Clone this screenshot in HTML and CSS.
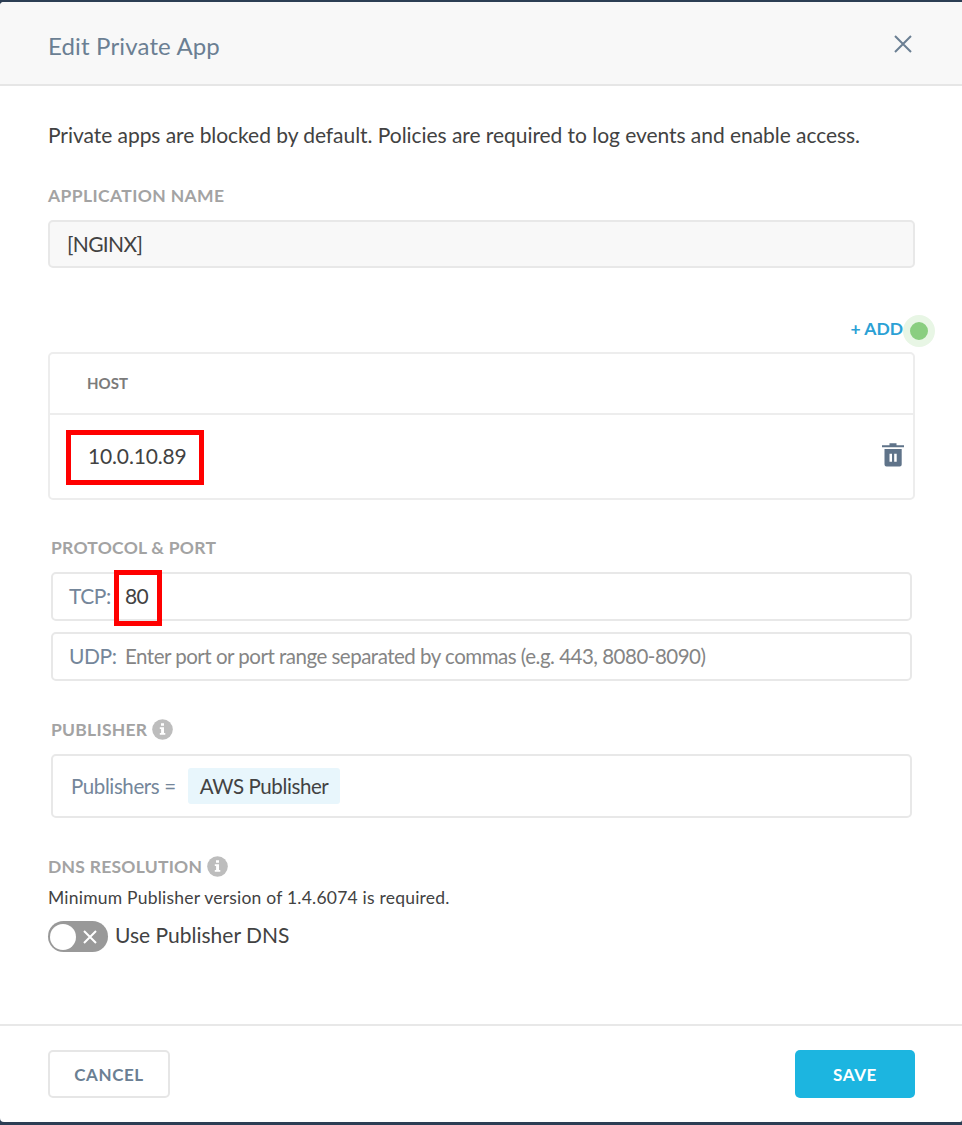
FILE: index.html
```
<!DOCTYPE html>
<html lang="en">

<head>
    <meta charset="UTF-8">
    <meta name="viewport" content="width=device-width, initial-scale=1.0">
    <title>Edit Private App</title>
    <link rel="stylesheet" href="styles.css">
</head>

<body>
    <div class="modal">
        <div class="modal-header">
            <h1>Edit Private App</h1>
            <button class="close-button" aria-label="Close">
                <svg width="20" height="20" viewBox="0 0 20 20">
                    <path d="M2 2L18 18M18 2L2 18" />
                </svg>
            </button>
        </div>

        <div class="modal-body">
            <p class="intro">Private apps are blocked by default. Policies are required to log events and enable access.</p>

            <div class="label app-label">APPLICATION NAME</div>
            <div class="input input-disabled">[NGINX]</div>

            <div class="add-row">
                <a class="add-link">+ ADD</a>
                <span class="beacon"></span>
            </div>

            <div class="host-table">
                <div class="host-head">HOST</div>
                <div class="host-row">
                    <div class="marked marked-host">10.0.10.89</div>
                    <svg class="trash" width="24" height="26" viewBox="0 0 24 26">
                        <path d="M8.5 1.2h7v2H23v2.1H1V3.2h7.5z" />
                        <path fill-rule="evenodd" d="M3.5 7h17.2v15.5q0 2-2 2H5.500q-2 0-2-2zM8.500 11.800v8H11v-8zM13.200 11.800v8h2.500v-8z" />
                    </svg>
                </div>
            </div>

            <div class="group">
                <div class="label">PROTOCOL &amp; PORT</div>
                <div class="input port">
                    <span class="prefix">TCP:</span>
                    <div class="marked marked-port">80</div>
                </div>
                <div class="input port">
                    <span class="prefix">UDP:</span>
                    <span class="placeholder">Enter port or port range separated by commas (e.g. 443, 8080-8090)</span>
                </div>
            </div>

            <div class="group">
                <div class="label">
                    <span>PUBLISHER</span>
                    <svg class="info" width="21" height="21" viewBox="0 0 21 21">
                        <circle cx="10.5" cy="10.5" r="10.3" />
                        <path d="M9 4.300h3v2.500H9zM7.800 8.300H12v5.700h1.300v1.800H7.800V14h1.300v-3.900H7.800z" />
                    </svg>
                </div>
                <div class="input publishers">
                    <span class="prefix">Publishers =</span>
                    <span class="chip">AWS Publisher</span>
                </div>
            </div>

            <div class="label dns-label">
                <span>DNS RESOLUTION</span>
                <svg class="info" width="21" height="21" viewBox="0 0 21 21">
                    <circle cx="10.5" cy="10.5" r="10.3" />
                    <path d="M9 4.300h3v2.500H9zM7.800 8.300H12v5.700h1.300v1.800H7.800V14h1.300v-3.900H7.800z" />
                </svg>
            </div>
            <p class="note">Minimum Publisher version of 1.4.6074 is required.</p>
            <div class="toggle-row">
                <span class="toggle">
                    <span class="knob"></span>
                    <svg width="14" height="14" viewBox="0 0 14 14">
                        <path d="M1 1L13 13M13 1L1 13" />
                    </svg>
                </span>
                <span class="toggle-text">Use Publisher DNS</span>
            </div>
        </div>

        <div class="modal-footer">
            <button class="btn btn-cancel">CANCEL</button>
            <button class="btn btn-save">SAVE</button>
        </div>
    </div>
</body>

</html>
```
FILE: styles.css
```
* {
    box-sizing: border-box;
    margin: 0;
    padding: 0;
}

body {
    background: #2c3e54;
    font-family: Lato, "Open Sans", sans-serif;
    font-size: 21px;
    color: #424242;
    padding-top: 2px;
}

.modal {
    height: 1120px;
    background: white;
    border-radius: 4px 0 2px 4px;
    display: flex;
    flex-direction: column;
}

.modal-header {
    height: 84px;
    background: #f8f8f8;
    border-bottom: 2px solid #e6e6e6;
    border-radius: 4px 0 0 0;
    display: flex;
    justify-content: space-between;
    align-items: center;
    padding: 4px 49px 0 48px;
}

h1 {
    font-size: 24px;
    font-weight: normal;
    letter-spacing: 0.15px;
    color: #6b7f93;
}

.close-button {
    width: 20px;
    height: 20px;
    margin-bottom: 2px;
    border: 0;
    background: none;
}

.close-button svg {
    display: block;
    fill: none;
    stroke: #6b7f93;
    stroke-width: 2;
}

.modal-body {
    flex: 1;
    padding: 37px 47px 0 48px;
}

.intro {
    height: 24px;
    line-height: 24px;
    letter-spacing: -0.05px;
    margin-bottom: 39px;
    white-space: nowrap;
}

.label {
    height: 20px;
    line-height: 20px;
    font-size: 17.5px;
    font-weight: bold;
    letter-spacing: 0.25px;
    color: #a3a3a3;
    margin-bottom: 14px;
    display: flex;
    align-items: center;
    gap: 5px;
}

.app-label {
    letter-spacing: 0.38px;
}

.input {
    height: 49px;
    border: 2px solid #e8e8e8;
    border-radius: 5px;
    display: flex;
    align-items: center;
    white-space: nowrap;
}

.input-disabled {
    height: 48px;
    background: #f8f8f8;
    padding: 0 0 2px 17px;
    letter-spacing: -0.65px;
}

.add-row {
    height: 32px;
    margin: 47px -20px 5px 0;
    display: flex;
    justify-content: flex-end;
    align-items: center;
}

.add-link {
    font-size: 17.5px;
    font-weight: bold;
    color: #2ba1d5;
    padding-bottom: 6px;
}

.beacon {
    width: 32px;
    height: 32px;
    border: 7px solid #e8f6e5;
    border-radius: 50%;
    background: #8ace80;
}

.host-table {
    height: 148px;
    border: 2px solid #ededed;
    border-radius: 5px;
    margin-bottom: 38px;
}

.host-head {
    height: 61px;
    border-bottom: 2px solid #ededed;
    padding: 0 0 2px 37px;
    display: flex;
    align-items: center;
    font-size: 15px;
    font-weight: bold;
    color: #7b7b7b;
}

.host-row {
    height: 83px;
    padding: 2px 8px 0 16px;
    display: flex;
    justify-content: space-between;
    align-items: center;
}

/* red callout frames around the values to check */
.marked {
    border: 5px solid #ff0000;
    display: flex;
    align-items: center;
}

.marked-host {
    width: 138px;
    height: 55px;
    padding: 0 0 4px 17px;
    letter-spacing: -0.15px;
}

.marked-port {
    width: 48px;
    height: 56px;
    margin-top: 2px;
    padding: 0 0 4px 6px;
    letter-spacing: -0.6px;
}

.trash {
    fill: #5f7389;
    margin-bottom: 6px;
}

.group {
    margin: 0 3px 39px;
}

.port {
    padding-left: 16px;
    margin-bottom: 11px;
}

.prefix {
    color: #74869a;
}

.port .prefix {
    width: 45px;
    padding-bottom: 2px;
    letter-spacing: -0.45px;
}

.placeholder {
    font-size: 20.5px;
    letter-spacing: -0.5px;
    color: #858585;
    padding: 0 0 2px 11px;
}

.info {
    margin-bottom: 2px;
}

.info circle {
    fill: #bdbdbd;
}

.info path {
    fill: white;
}

.publishers {
    height: 64px;
    padding-left: 18px;
    gap: 12px;
    font-size: 20.5px;
    letter-spacing: -0.4px;
}

.chip {
    width: 152px;
    height: 36px;
    background: #e8f6fc;
    border-radius: 3px;
    display: flex;
    align-items: center;
    padding-left: 12px;
}

.dns-label {
    margin-bottom: 10px;
}

.note {
    height: 22px;
    line-height: 22px;
    font-size: 17.5px;
    letter-spacing: 0.22px;
    margin-bottom: 12px;
}

.toggle-row {
    height: 31px;
    display: flex;
    align-items: center;
    gap: 7px;
}

.toggle {
    width: 60px;
    height: 31px;
    border-radius: 16px;
    background: #999999;
    padding: 0 11px 0 2px;
    display: flex;
    align-items: center;
    justify-content: space-between;
}

.toggle-text {
    padding-bottom: 4px;
}

.knob {
    width: 26px;
    height: 26px;
    border-radius: 50%;
    background: white;
}

.toggle svg {
    stroke: white;
    stroke-width: 2;
}

.modal-footer {
    height: 98px;
    border-top: 2px solid #e8e8e8;
    padding: 24px 47px 0 48px;
    display: flex;
    justify-content: space-between;
}

.btn {
    height: 48px;
    border-radius: 5px;
    font-family: inherit;
    font-size: 17px;
    font-weight: bold;
    letter-spacing: 0.6px;
    padding-top: 1px;
}

.btn-cancel {
    width: 122px;
    border: 2px solid #e6e6e6;
    background: white;
    color: #6b7f93;
}

.btn-save {
    width: 120px;
    border: 0;
    background: #1cb5e0;
    color: white;
}
```
